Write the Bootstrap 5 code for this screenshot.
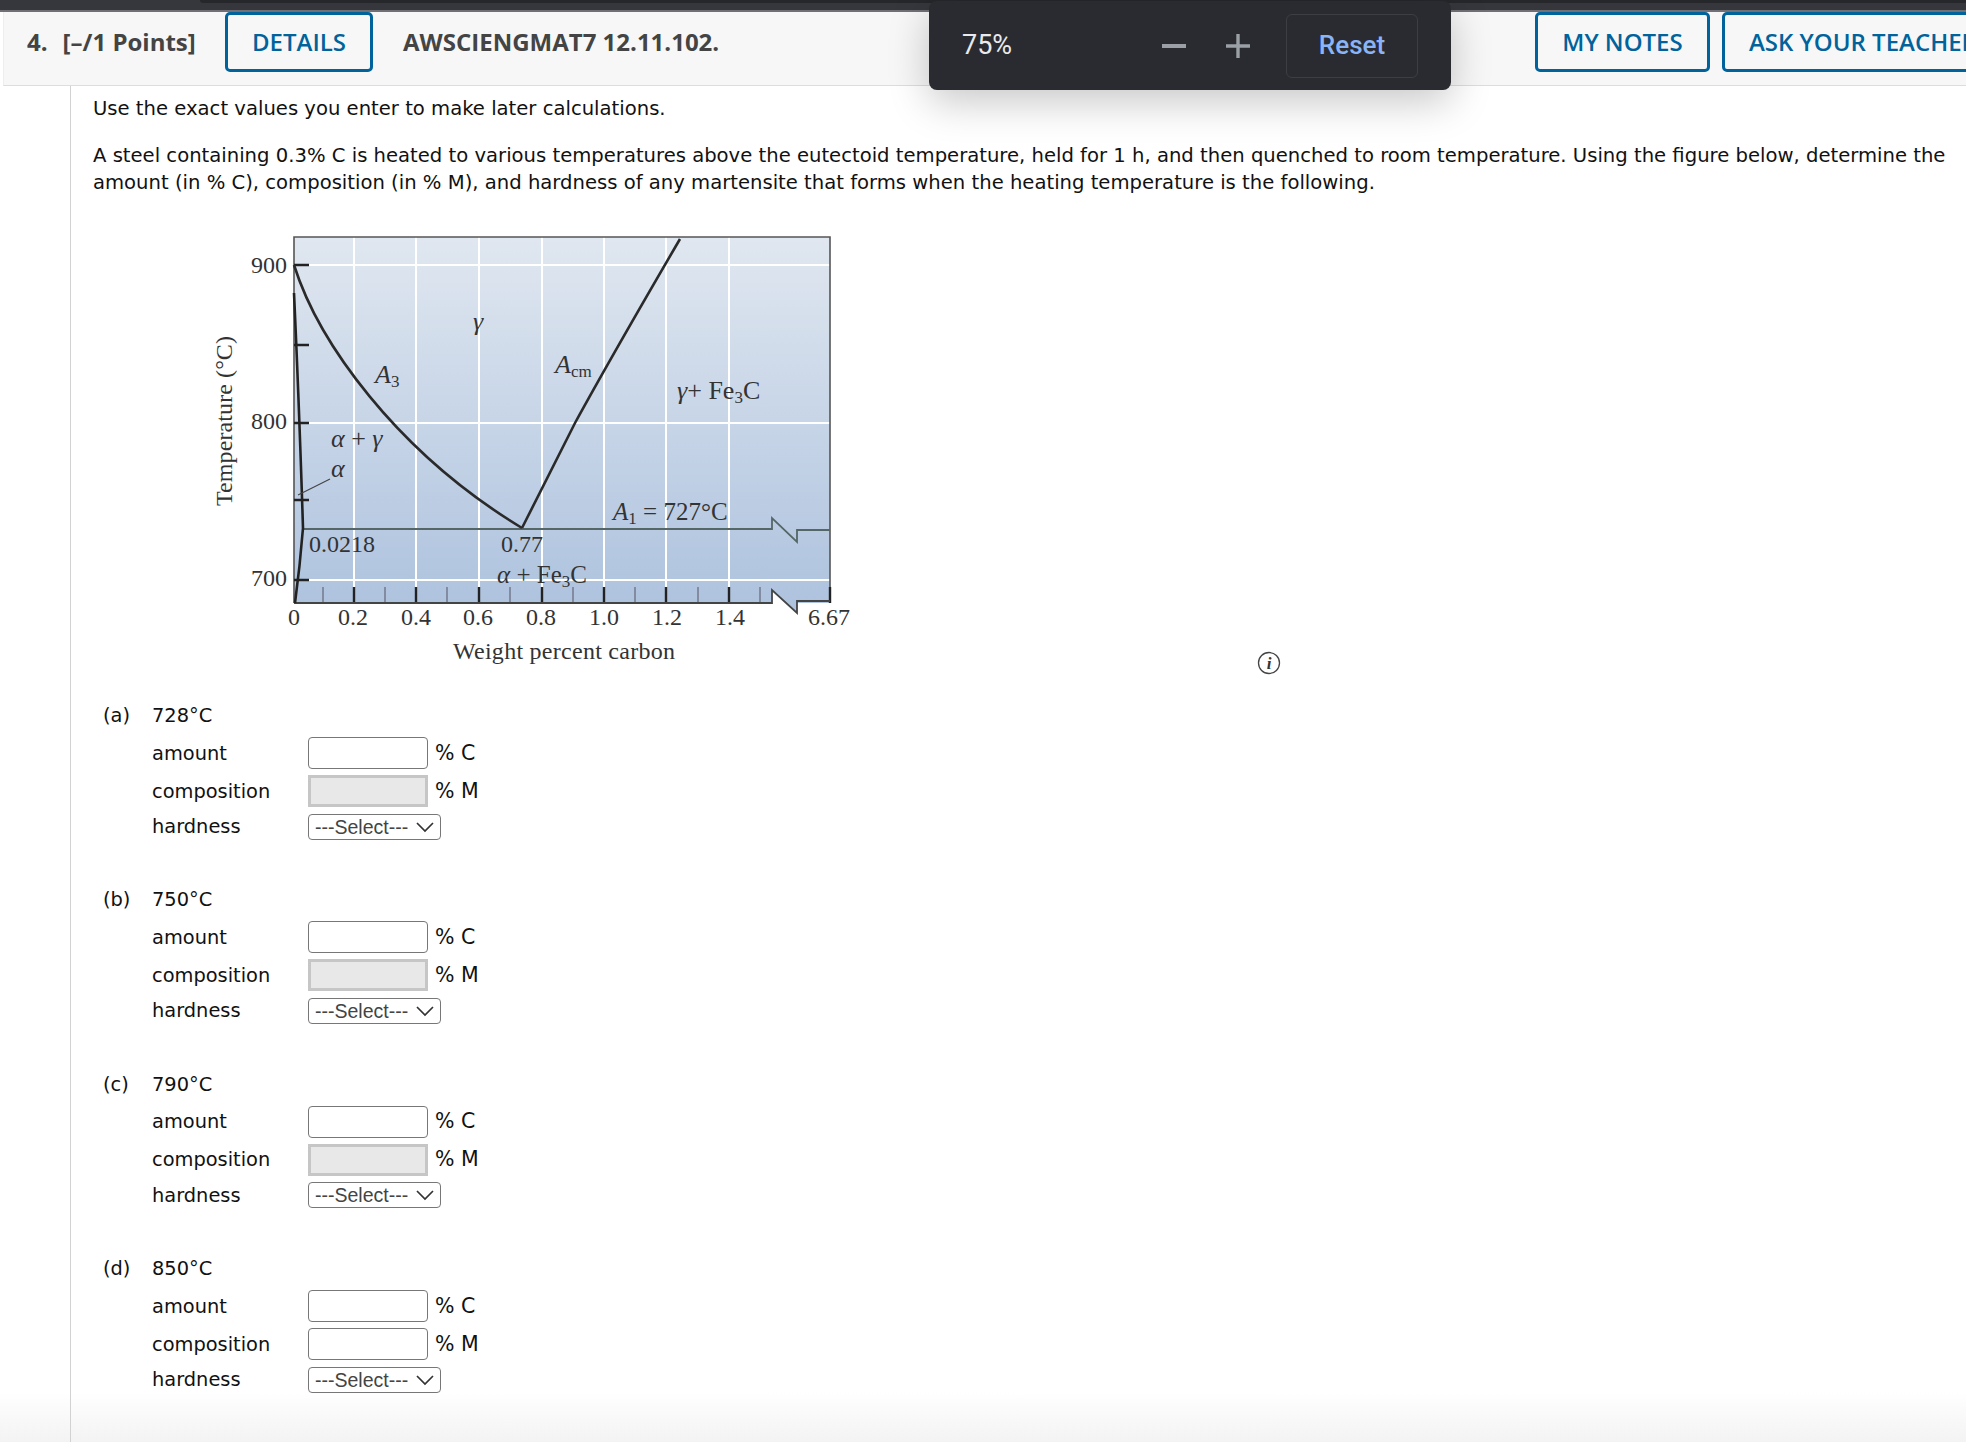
<!DOCTYPE html>
<html lang="en">
<head>
<meta charset="UTF-8">
<title>Question 4</title>
<link rel="stylesheet" href="https://cdn.jsdelivr.net/npm/bootstrap@5.3.0/dist/css/bootstrap.min.css">
<style>
html, body { height: 1442px; overflow: hidden; }
body {
    position: relative;
    font-family: "DejaVu Sans", Verdana, sans-serif;
    font-size: 19.4px;
    line-height: 27px;
    color: #111;
    background: #fff linear-gradient(#fff, #f3f3f3) no-repeat bottom / 100% 50px;
}
.top-strip { height: 12px; background: #36373c; border-bottom: 2px solid #717175; padding-left: 200px; }
.top-strip div { height: 3px; background: #26272b; border-radius: 0 0 0 4px; }
.q-head {
    height: 74px;
    margin-left: 3px;
    padding-left: 23px;
    background: #f7f7f7;
    border-bottom: 1px solid #ddd;
    border-left: 1px solid #eee;
    font-family: "Open Sans", sans-serif;
    font-size: 24px;
    font-weight: 700;
    color: #444;
    white-space: nowrap;
}
.q-points { width: 198px; flex-shrink: 0; padding-bottom: 14px; }
.q-points span { margin-left: 15px; }
.q-title { width: 1162px; flex-shrink: 0; padding-left: 30px; padding-bottom: 14px; }
.head-btn {
    height: 60px;
    flex-shrink: 0;
    padding: 0 24px;
    border: 3px solid #00639b;
    border-radius: 5px;
    background: transparent;
    color: #00639b;
    font-size: 24px;
    font-weight: 600;
    line-height: 52px;
    white-space: nowrap;
}
.head-btn:hover { background: transparent; color: #00639b; border-color: #00639b; }
.btn-details { width: 148px; padding: 0; }
.btn-notes { width: 175px; padding: 0; margin-right: 12px; }
.zoom-pop {
    position: absolute;
    left: 929px;
    top: 1px;
    width: 522px;
    height: 89px;
    padding: 0 33px;
    background: #2a2b30;
    border-radius: 8px;
    box-shadow: 0 12px 40px rgba(0, 0, 0, .22);
    font-family: Roboto, sans-serif;
    font-size: 27px;
    color: #e8eaed;
}
.zoom-level { width: 200px; }
.zoom-icons { width: 88px; margin-right: 36px; }
.zoom-reset {
    width: 132px;
    height: 64px;
    border: 1px solid #3d3e43;
    border-radius: 6px;
    background: transparent;
    color: #8ab4f8;
    font-size: 26px;
    font-weight: 500;
    padding: 0;
}
.q-body { margin-left: 70px; height: 1356px; padding: 9px 0 0 22px; border-left: 1px solid #d2d2d2; }
.q-body p { margin: 0 0 20px; width: 1870px; font-size: 19.62px; }
.fig-row { margin: 25px 0 22px 97px; height: 460px; }
.fig-row svg { display: block; }
.fig-label { font-family: "Liberation Serif", serif; font-size: 24px; fill: #333; }
.fig-inner { font-size: 26px; }
.fig-a1 { font-size: 25px; }
.fig-italic { font-style: italic; }
.fig-small { font-size: 17px; font-style: normal; }
.info-icon { margin: 430px 0 0 387px; flex-shrink: 0; }
.part { margin: 0 0 47.4px 10px; }
.part-head { height: 26px; line-height: 26px; }
.part-tag { width: 49px; }
.ans-row { margin: 6px 0 0 49px; }
.ans-row.first { margin-top: 8px; }
.ans-name { width: 156px; }
.ans-unit { padding-left: 7px; font-size: 20.5px; }
.ans-input.form-control {
    width: 120px;
    height: 32px;
    min-height: 0;
    padding: 0 6px;
    border: 1px solid #777;
    border-radius: 4px;
    background: #fff;
}
.ans-input.form-control:disabled {
    background: #e8e8e8;
    border: 3px solid #c6c6c6;
    border-radius: 0;
}
.ans-select.form-select {
    width: 133px;
    height: 26px;
    padding: 0 0 0 6px;
    border: 1px solid #777;
    border-radius: 4px;
    font-family: "Liberation Sans", Arial, sans-serif;
    font-size: 19.5px;
    line-height: 24px;
    color: #444;
    background-image: url("data:image/svg+xml,%3csvg xmlns='http://www.w3.org/2000/svg' viewBox='0 0 18 12'%3e%3cpath fill='none' stroke='%23333' stroke-width='1.7' d='M1 2l8 8 8-8'/%3e%3c/svg%3e");
    background-position: right 6px center;
    background-size: 18px 12px;
}
</style>
</head>
<body>

<div class="top-strip"><div></div></div>

<div class="q-head d-flex align-items-center overflow-hidden">
    <div class="q-points">4.<span>[&ndash;/1 Points]</span></div>
    <button type="button" class="btn head-btn btn-details align-self-start mt-0">DETAILS</button>
    <div class="q-title">AWSCIENGMAT7 12.11.102.</div>
    <button type="button" class="btn head-btn btn-notes align-self-start">MY NOTES</button>
    <button type="button" class="btn head-btn align-self-start">ASK YOUR TEACHER</button>
</div>

<div class="zoom-pop d-flex align-items-center">
    <div class="zoom-level">75%</div>
    <div class="zoom-icons d-flex align-items-center justify-content-between">
        <svg width="24" height="24" viewBox="0 0 24 24"><rect x="0" y="10" width="24" height="4" fill="#9aa0a6"/></svg>
        <svg width="24" height="24" viewBox="0 0 24 24"><path d="M0 12H24M12 0V24" stroke="#9aa0a6" stroke-width="3.4" fill="none"/></svg>
    </div>
    <button type="button" class="btn zoom-reset">Reset</button>
</div>

<div class="q-body">
    <p>Use the exact values you enter to make later calculations.</p>
    <p>A steel containing 0.3% C is heated to various temperatures above the eutectoid temperature, held for 1 h, and then quenched to room temperature. Using the figure below, determine the amount (in % C), composition (in % M), and hardness of any martensite that forms when the heating temperature is the following.</p>

    <div class="fig-row d-flex">
        <svg width="680" height="460" viewBox="190 220 680 460" class="flex-shrink-0">
            <defs>
                <linearGradient id="plotFill" x1="0" y1="0" x2="0" y2="1">
                    <stop offset="0" stop-color="#e0e7f0"/>
                    <stop offset="1" stop-color="#adc2de"/>
                </linearGradient>
            </defs>
            <path d="M294 236H830V602H797V612L772 589V602H294Z" fill="url(#plotFill)"/>
            <path d="M294 264H830M294 422H830M294 579H830M354 236V602M416 236V602M479 236V602M542 236V602M604 236V602M666 236V602M729 236V602" stroke="#fff" stroke-width="2" fill="none"/>
            <path d="M294 602V236H830V602" stroke="#555" stroke-width="1.6" fill="none"/>
            <path d="M323 586V602M385 586V602M447 586V602M510 586V602M573 586V602M635 586V602M698 586V602M760 586V602" stroke="#667" stroke-width="1.2"/>
            <path d="M354 586V602M416 586V602M479 586V602M542 586V602M604 586V602M666 586V602M729 586V602M830 586V602" stroke="#222" stroke-width="2.4"/>
            <path d="M294 264H309M294 344H309M294 422H309M294 499H309M294 579H309" stroke="#222" stroke-width="2.4"/>
            <path d="M294 602H772V589L797 612V600H830" stroke="#444" stroke-width="1.8" fill="none"/>
            <path d="M303 528H772V517L797 541V529H830" stroke="#566" stroke-width="1.8" fill="none"/>
            <path d="M294 292Q299 400 303 527Q300 565 295 602" stroke="#222" stroke-width="2.6" fill="none"/>
            <path d="M294 264C318 340 395 450 522 527" stroke="#2a2a2a" stroke-width="2.6" fill="none"/>
            <path d="M522 527L575 422Q610 358 680 238" stroke="#2a2a2a" stroke-width="2.6" fill="none"/>
            <path d="M298 494L330 478" stroke="#444" stroke-width="1.2"/>

            <text class="fig-label" x="251" y="272">900</text>
            <text class="fig-label" x="251" y="428">800</text>
            <text class="fig-label" x="251" y="585">700</text>
            <text class="fig-label" transform="rotate(-90 232 505)" x="232" y="505" textLength="170">Temperature (&#176;C)</text>
            <text class="fig-label" x="288" y="624">0</text>
            <text class="fig-label" x="338" y="624">0.2</text>
            <text class="fig-label" x="401" y="624">0.4</text>
            <text class="fig-label" x="463" y="624">0.6</text>
            <text class="fig-label" x="526" y="624">0.8</text>
            <text class="fig-label" x="589" y="624">1.0</text>
            <text class="fig-label" x="652" y="624">1.2</text>
            <text class="fig-label" x="715" y="624">1.4</text>
            <text class="fig-label" x="808" y="624">6.67</text>
            <text class="fig-label" x="453" y="658" textLength="222">Weight percent carbon</text>
            <text class="fig-label fig-inner fig-italic" x="473" y="329">&#947;</text>
            <text class="fig-label fig-inner fig-italic" x="375" y="382">A<tspan class="fig-small" dy="4">3</tspan></text>
            <text class="fig-label fig-inner fig-italic" x="555" y="372">A<tspan class="fig-small" dy="4">cm</tspan></text>
            <text class="fig-label fig-inner" x="677" y="398"><tspan class="fig-italic">&#947;</tspan>+ Fe<tspan class="fig-small" dy="4">3</tspan><tspan dy="-4">C</tspan></text>
            <text class="fig-label fig-inner" x="331" y="446"><tspan class="fig-italic">&#945;</tspan> + <tspan class="fig-italic">&#947;</tspan></text>
            <text class="fig-label fig-inner fig-italic" x="331" y="476">&#945;</text>
            <text class="fig-label fig-a1" x="613" y="519"><tspan class="fig-italic">A</tspan><tspan class="fig-small" dy="4">1</tspan><tspan dy="-4"> = 727&#176;C</tspan></text>
            <text class="fig-label" x="309" y="551">0.0218</text>
            <text class="fig-label" x="501" y="551">0.77</text>
            <text class="fig-label fig-a1" x="497" y="582"><tspan class="fig-italic">&#945;</tspan> + Fe<tspan class="fig-small" dy="4">3</tspan><tspan dy="-4">C</tspan></text>
        </svg>
        <svg class="info-icon" width="24" height="24" viewBox="0 0 24 24">
            <circle cx="12" cy="12" r="10.5" fill="#fff" stroke="#444" stroke-width="1.3"/>
            <text x="12" y="18" text-anchor="middle" font-family="Liberation Serif, serif" font-style="italic" font-weight="700" font-size="17" fill="#333">i</text>
        </svg>
    </div>

    <div class="part">
        <div class="part-head d-flex"><div class="part-tag">(a)</div><div>728&#176;C</div></div>
        <div class="ans-row first d-flex align-items-center"><div class="ans-name">amount</div><input class="form-control ans-input" type="text"><div class="ans-unit">% C</div></div>
        <div class="ans-row d-flex align-items-center"><div class="ans-name">composition</div><input class="form-control ans-input" type="text" disabled><div class="ans-unit">% M</div></div>
        <div class="ans-row d-flex align-items-center"><div class="ans-name">hardness</div><select class="form-select ans-select"><option>---Select---</option></select></div>
    </div>

    <div class="part">
        <div class="part-head d-flex"><div class="part-tag">(b)</div><div>750&#176;C</div></div>
        <div class="ans-row first d-flex align-items-center"><div class="ans-name">amount</div><input class="form-control ans-input" type="text"><div class="ans-unit">% C</div></div>
        <div class="ans-row d-flex align-items-center"><div class="ans-name">composition</div><input class="form-control ans-input" type="text" disabled><div class="ans-unit">% M</div></div>
        <div class="ans-row d-flex align-items-center"><div class="ans-name">hardness</div><select class="form-select ans-select"><option>---Select---</option></select></div>
    </div>

    <div class="part">
        <div class="part-head d-flex"><div class="part-tag">(c)</div><div>790&#176;C</div></div>
        <div class="ans-row first d-flex align-items-center"><div class="ans-name">amount</div><input class="form-control ans-input" type="text"><div class="ans-unit">% C</div></div>
        <div class="ans-row d-flex align-items-center"><div class="ans-name">composition</div><input class="form-control ans-input" type="text" disabled><div class="ans-unit">% M</div></div>
        <div class="ans-row d-flex align-items-center"><div class="ans-name">hardness</div><select class="form-select ans-select"><option>---Select---</option></select></div>
    </div>

    <div class="part">
        <div class="part-head d-flex"><div class="part-tag">(d)</div><div>850&#176;C</div></div>
        <div class="ans-row first d-flex align-items-center"><div class="ans-name">amount</div><input class="form-control ans-input" type="text"><div class="ans-unit">% C</div></div>
        <div class="ans-row d-flex align-items-center"><div class="ans-name">composition</div><input class="form-control ans-input" type="text"><div class="ans-unit">% M</div></div>
        <div class="ans-row d-flex align-items-center"><div class="ans-name">hardness</div><select class="form-select ans-select"><option>---Select---</option></select></div>
    </div>
</div>

<script src="https://cdn.jsdelivr.net/npm/bootstrap@5.3.0/dist/js/bootstrap.bundle.min.js"></script>
</body>
</html>
